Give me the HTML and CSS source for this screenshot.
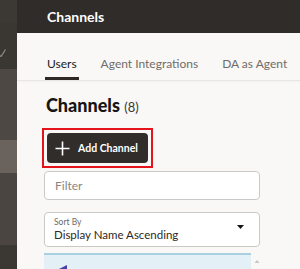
FILE: index.html
```html
<!DOCTYPE html>
<html>
<head>
<meta charset="utf-8">
<link rel="stylesheet" href="styles.css">
</head>
<body>
<div class="app">
  <nav class="sidebar">
    <div class="band b1"></div>
    <div class="band b2">
      <svg class="check" width="8" height="10" viewBox="0 0 8 10"><path d="M0 8 L2 9.5 L6.5 2.5" fill="none" stroke="#8d8883" stroke-width="1.3"/></svg>
    </div>
    <div class="band b3"></div>
    <div class="band b4"></div>
    <div class="band b5"></div>
    <div class="band b6"></div>
  </nav>
  <main class="main">
    <header class="header">Channels</header>
    <section class="content">
      <div class="tabs">
        <div class="tab active">Users</div>
        <div class="tab">Agent Integrations</div>
        <div class="tab">DA as Agent</div>
      </div>
      <div class="panel">
        <h1 class="title">Channels <span class="count">(8)</span></h1>
        <div class="highlight">
          <button class="add-btn">
            <svg width="15" height="15" viewBox="0 0 15 15"><path d="M7.5 0.5 V14.5 M0.5 7.5 H14.5" stroke="#fff" stroke-width="1.6" fill="none"/></svg>
            <span>Add Channel</span>
          </button>
        </div>
        <div class="field filter">Filter</div>
        <div class="field select">
          <div class="sel-text">
            <div class="sel-label">Sort By</div>
            <div class="sel-value">Display Name Ascending</div>
          </div>
          <svg class="caret" width="7" height="4" viewBox="0 0 7 4"><path d="M0 0 H7 L3.5 4 Z" fill="#161513"/></svg>
        </div>
        <div class="list-row">
          <div class="list">
            <svg class="item-icon" width="12" height="6" viewBox="0 0 12 6"><path d="M0 6 L12 0 V6 Z" fill="#4a3fa8"/></svg>
          </div>
          <div class="scroll">
            <svg width="6" height="14" viewBox="0 0 6 14"><path d="M0.5 4 L3 1 L5.5 4 Z" fill="#c9c7c4"/><path d="M0.5 13 L3 10 L5.5 13 Z" fill="#d6d4d1"/></svg>
          </div>
        </div>
      </div>
    </section>
  </main>
</div>
</body>
</html>
```
FILE: styles.css
```css
* { box-sizing: border-box; }
html, body { margin: 0; padding: 0; }
body {
  width: 300px;
  height: 269px;
  overflow: hidden;
  background: #f9f8f6;
  font-family: Lato, "Open Sans", sans-serif;
}
.app { display: flex; height: 269px; }
.sidebar { width: 17px; display: flex; flex-direction: column; flex: none; }
.band { flex: none; position: relative; overflow: hidden; }
.b1 { height: 23px; background: #3c3834; }
.b2 { height: 46px; background: #3a3632; }
.b3 { height: 71px; background: #4e4844; }
.b4 { height: 33px; background: #6a625c; }
.b5 { height: 72px; background: #4a4541; }
.b6 { flex: 1; background: #3b3733; }
.check { position: absolute; left: -1px; top: 24px; }
.main { flex: 1; display: flex; flex-direction: column; min-width: 0; }
.header {
  flex: none;
  height: 33px;
  background: #302c29;
  color: #fff;
  font-weight: 700;
  font-size: 14px;
  line-height: 33px;
  padding-left: 30px;
}
.content { flex: 1; background: #f9f8f6; }
.tabs {
  height: 48px;
  display: flex;
  align-items: flex-end;
  gap: 20px;
  padding-left: 28px;
  border-bottom: 1px solid #e8e6e3;
  box-shadow: 0 1px 2px rgba(0,0,0,0.03);
}
.tab {
  font-size: 12px;
  color: #716c68;
  padding: 0 2px;
  height: 30px;
  line-height: 27px;
  border-bottom: 3px solid transparent;
  white-space: nowrap;
}
.tab.active { color: #1c1a18; border-bottom-color: #2c2926; }
.panel { padding-left: 27px; display: flex; flex-direction: column; align-items: flex-start; }
.title {
  margin: 13px 0 0 2px;
  font-size: 18px;
  font-weight: 900;
  color: #161513;
  line-height: 22px;
}
.count { font-size: 13px; font-weight: 400; color: #3a3734; }
.highlight {
  margin: 10px 0 0 -2px;
  border: 2px solid #e3141c;
  padding: 3px;
}
.add-btn {
  width: 101px;
  height: 30px;
  border: none;
  border-radius: 4px;
  background: #312d2a;
  color: #fff;
  display: flex;
  align-items: center;
  gap: 8px;
  padding: 0 0 0 8px;
  font-family: Lato, sans-serif;
  font-weight: 700;
  font-size: 10.5px;
}
.field {
  width: 216px;
  background: #fff;
  border: 1px solid #cbc9c6;
  border-radius: 4px;
}
.filter {
  margin-top: 3px;
  height: 29px;
  line-height: 27px;
  padding-left: 10px;
  font-size: 12px;
  color: #8a8682;
}
.select {
  margin-top: 12px;
  height: 35px;
  display: flex;
  align-items: center;
  justify-content: space-between;
  padding: 0 15px 0 9px;
}
.sel-label { font-size: 8.5px; color: #6f6b67; line-height: 11px; }
.sel-value { font-size: 11.5px; color: #2c2926; line-height: 14px; }
.caret { margin-top: -6px; }
.list-row { margin-top: 6px; display: flex; gap: 3px; }
.list {
  width: 207px;
  height: 20px;
  background: #e3f0f6;
  border-top: 2px solid #a8d0e0;
  position: relative;
}
.item-icon { position: absolute; left: 11px; top: 10px; }
.scroll { width: 8px; padding-top: 4px; }
```
